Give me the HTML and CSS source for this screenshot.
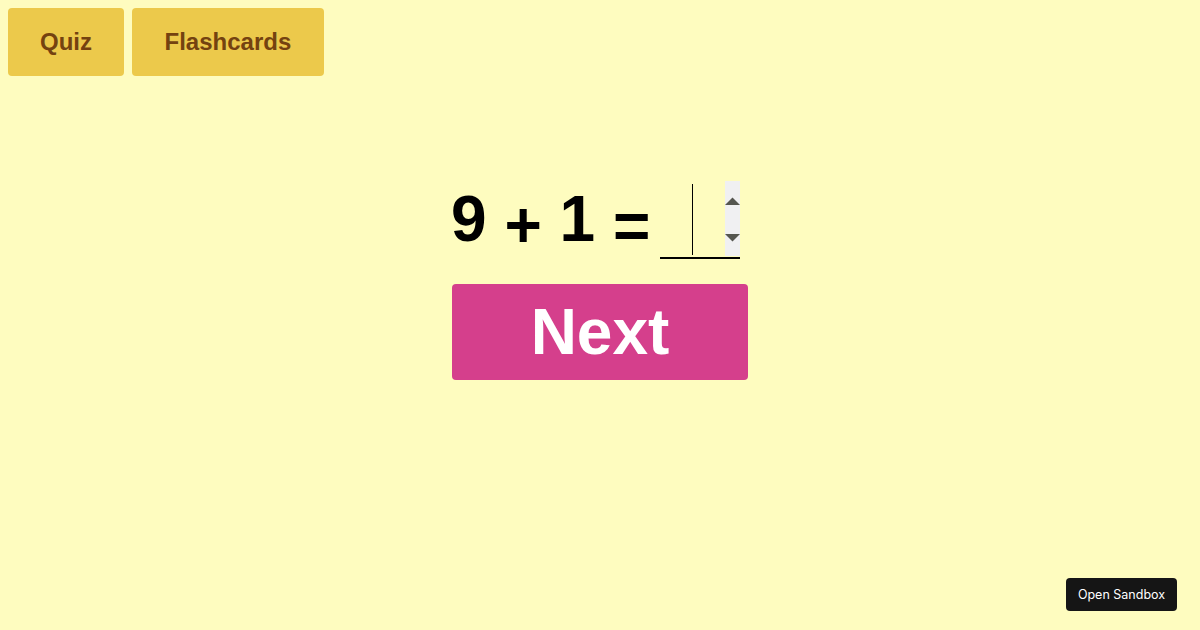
FILE: index.html
```html
<!DOCTYPE html>
<html lang="en">
<head>
<meta charset="utf-8">
<title>Math Quiz</title>
<link rel="stylesheet" href="styles.css">
</head>
<body>
<nav class="tabs">
  <button class="tab">Quiz</button>
  <button class="tab tab-wide">Flashcards</button>
</nav>
<main class="quiz">
  <div class="card">
    <div class="equation">
      <span class="problem">9 <span class="sym sym-plus">+</span> 1 <span class="sym sym-eq">=</span></span>
      <span class="answer-wrap">
        <input class="answer" type="number">
        <span class="caret"></span>
        <span class="spin">
          <svg width="15" height="75" viewBox="0 0 15 75">
            <polygon points="7.5,16.5 15,24 0,24" fill="#555650"/>
            <polygon points="0,53 15,53 7.5,60.5" fill="#555650"/>
          </svg>
        </span>
      </span>
    </div>
    <button class="next">Next</button>
  </div>
</main>
<a class="sandbox">Open Sandbox</a>
</body>
</html>
```

FILE: styles.css
```css
html, body {
  background: #fefcbf;
}
body {
  margin: 8px;
  font-family: "Liberation Sans", Arial, sans-serif;
}
.tabs {
  display: flex;
  gap: 8px;
}
.tab {
  font-family: "Liberation Sans", Arial, sans-serif;
  font-size: 24px;
  font-weight: 700;
  line-height: 28px;
  color: #744210;
  background: #ecc94b;
  border: none;
  border-radius: 4px;
  padding: 20px 32px;
  margin: 0;
}
.tab-wide {
  padding: 20px 32.5px;
}
.quiz {
  display: flex;
  justify-content: center;
  padding-top: 105px;
}
.card {
  width: 296px;
  display: flex;
  flex-direction: column;
}
.equation {
  display: flex;
  align-items: baseline;
  gap: 10px;
  margin-left: -1px;
}
.problem {
  font-size: 64px;
  font-weight: 700;
  color: #000;
  white-space: pre;
}
.sym {
  line-height: 0;
}
.sym-plus {
  vertical-align: -6px;
}
.sym-eq {
  vertical-align: -7px;
}
.answer-wrap {
  position: relative;
  display: inline-block;
}
.answer {
  box-sizing: border-box;
  width: 80px;
  font-family: "Liberation Sans", Arial, sans-serif;
  font-size: 64px;
  text-align: center;
  background: transparent;
  border: none;
  border-bottom: 2px solid #000;
  padding: 1px 15px 1px 2px;
  outline: none;
  color: #000;
  caret-color: transparent;
  -moz-appearance: textfield;
}
.answer::-webkit-inner-spin-button,
.answer::-webkit-outer-spin-button {
  -webkit-appearance: none;
  margin: 0;
}
.caret {
  position: absolute;
  left: 32px;
  top: 3px;
  width: 1px;
  height: 71px;
  background: #000;
}
.spin {
  position: absolute;
  right: 0;
  top: 0;
  width: 15px;
  height: 75px;
  background: #f0f0f2;
  display: block;
}
.spin svg {
  display: block;
}
.next {
  margin-top: 25px;
  width: 296px;
  height: 96px;
  background: #d53f8c;
  color: #fff;
  border: none;
  border-radius: 4px;
  font-family: "Liberation Sans", Arial, sans-serif;
  font-size: 64px;
  font-weight: 700;
  padding: 0;
}
.sandbox {
  position: fixed;
  right: 23px;
  bottom: 19px;
  width: 111px;
  height: 33px;
  box-sizing: border-box;
  display: flex;
  align-items: center;
  justify-content: center;
  background: #151515;
  color: #fff;
  border-radius: 4px;
  font-family: Inter, "Liberation Sans", sans-serif;
  font-size: 12.5px;
}
```
